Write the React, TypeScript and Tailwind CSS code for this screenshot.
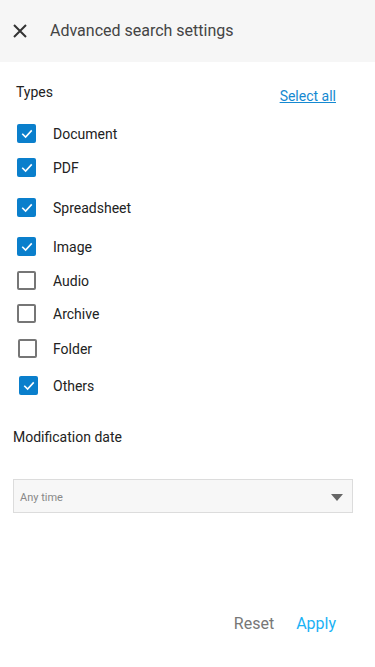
import React, { useState } from "react";

const TYPES = [
  { label: "Document", checked: true, mt: "mt-[19px]" },
  { label: "PDF", checked: true, mt: "mt-[15px]" },
  { label: "Spreadsheet", checked: true, mt: "mt-[21px]" },
  { label: "Image", checked: true, mt: "mt-[20px]" },
  { label: "Audio", checked: false, mt: "mt-[15px]" },
  { label: "Archive", checked: false, mt: "mt-[14px]" },
  { label: "Folder", checked: false, mt: "mt-[16px]" },
  { label: "Others", checked: true, mt: "mt-[18px]" },
];

// label offsets so every label starts at x=53 like the reference
const LABEL_ML = ["ml-[17px]", "ml-[17px]", "ml-[17px]", "ml-[17px]", "ml-[17px]", "ml-[17px]", "ml-[16px]", "ml-[15px]"];
const ROW_PL = ["pl-[17px]", "pl-[17px]", "pl-[17px]", "pl-[17px]", "pl-[17px]", "pl-[17px]", "pl-[18px]", "pl-[19px]"];

const Checkbox = ({ checked }: { checked: boolean }) =>
  checked ? (
    <div className="w-[19px] h-[19px] rounded-[2px] bg-[#0a7fcc] flex items-center justify-center">
      <svg width="12" height="12" viewBox="0 0 12 12" fill="none">
        <path d="M1.8 6.3 L4.6 9 L10.2 3" stroke="white" strokeWidth="1.6" strokeLinecap="square" />
      </svg>
    </div>
  ) : (
    <div className="w-[19px] h-[19px] rounded-[2px] border-2 border-[#767676] bg-white" />
  );

const App = () => {
  const [types, setTypes] = useState(TYPES);

  const toggle = (i: number) => {
    setTypes((prev) => prev.map((t, j) => (j === i ? { ...t, checked: !t.checked } : t)));
  };

  return (
    <div className="w-[375px] h-[667px] bg-white flex flex-col font-['Roboto',sans-serif] text-[#222]">
      {/* header */}
      <div className="h-[62px] bg-[#f6f6f6] flex items-center shrink-0">
        <svg className="ml-[13px]" width="14" height="14" viewBox="0 0 14 14">
          <path d="M1 1 L13 13 M13 1 L1 13" stroke="#333" strokeWidth="2" />
        </svg>
        <span className="ml-[23px] text-[16px] text-[#444]">Advanced search settings</span>
      </div>

      <div className="flex justify-between items-start mt-[21px] pl-[16px] pr-[39px]">
        <span className="text-[14px] leading-[18px]">Types</span>
        <a href="#" className="text-[14px] leading-[18px] mt-[4px] text-[#1589d1] underline">
          Select all
        </a>
      </div>

      <div className="flex flex-col">
        {types.map((t, i) => (
          <div
            key={t.label}
            className={`flex items-center cursor-pointer ${t.mt} ${ROW_PL[i]}`}
            onClick={() => toggle(i)}
          >
            <Checkbox checked={t.checked} />
            <span className={`text-[14px] leading-[18px] ${LABEL_ML[i]}`}>{t.label}</span>
          </div>
        ))}
      </div>

      <div className="mt-[33px] pl-[13px] text-[14px] leading-[18px]">Modification date</div>

      <div className="mt-[33px] mx-[13px] w-[340px] h-[34px] bg-[#f7f7f7] border border-[#dcdcdc] flex items-center justify-between pl-[6px] pr-[9px]">
        <span className="text-[11px] text-[#888] mt-[4px]">Any time</span>
        <svg width="12" height="7" viewBox="0 0 12 7" className="mt-[2px]">
          <path d="M0 0 L12 0 L6 7 Z" fill="#666" />
        </svg>
      </div>

      <div className="flex-1" />

      <div className="flex justify-end items-center pr-[39px] pb-[31px] gap-[22px] text-[16px]">
        <button className="text-[#777]">Reset</button>
        <button className="text-[#1ab2f5]">Apply</button>
      </div>
    </div>
  );
};

export default App;
